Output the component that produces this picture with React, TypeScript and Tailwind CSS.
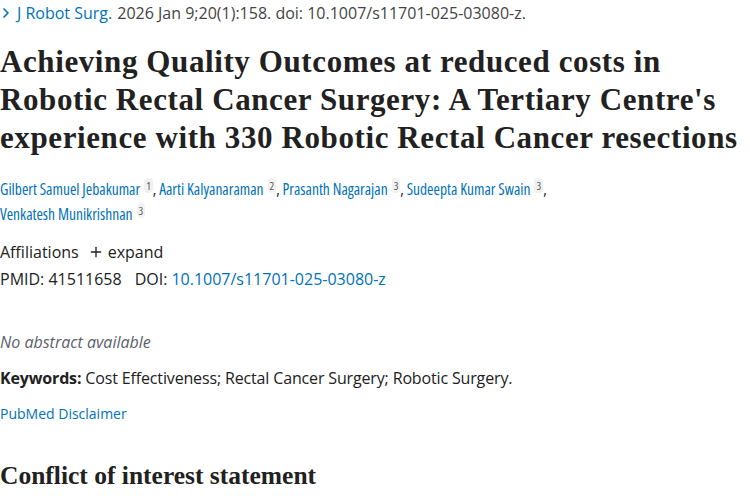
import { ChevronRight, Plus } from "lucide-react";

const authors = [
  { name: "Gilbert Samuel Jebakumar", aff: "1" },
  { name: "Aarti Kalyanaraman", aff: "2" },
  { name: "Prasanth Nagarajan", aff: "3" },
  { name: "Sudeepta Kumar Swain", aff: "3" },
  { name: "Venkatesh Munikrishnan", aff: "3" },
];

const sans = "font-['Open_Sans',sans-serif]";
const serif = "font-['Liberation_Serif',serif]";

export default function App() {
  return (
    <main className={`bg-white w-[750px] h-[500px] overflow-hidden text-[#212121] ${sans}`}>
      {/* Citation */}
      <div className="flex items-center h-[26px] text-[16px]">
        <ChevronRight className="h-4 w-4 text-[#0071bc] -ml-[2px]" strokeWidth={2.5} />
        <a href="#" className="text-[#0071bc] ml-[3px]">J Robot Surg.</a>
        <span className="ml-[5px] text-[#444]">2026 Jan 9;20(1):158. doi: 10.1007/s11701-025-03080-z.</span>
      </div>

      {/* Title */}
      <h1 className={`${serif} font-bold text-[31px] leading-[38px] tracking-[0.6px] text-[#212121] mt-[17px]`}>
        Achieving Quality Outcomes at reduced costs in Robotic Rectal Cancer Surgery: A Tertiary Centre's experience with 330 Robotic Rectal Cancer resections
      </h1>

      {/* Authors */}
      <div className="mt-[20px] w-[580px] text-[15.5px] leading-[25px] font-stretch-condensed">
        {authors.map((a, i) => (
          <span key={i}>
            <span className="whitespace-nowrap">
              <a href="#" className="text-[#0071bc]">{a.name}</a>
              <sup className="ml-[4px] px-[2px] bg-[#f1f1f1] text-[#555] text-[11px] rounded-sm">{a.aff}</sup>
              {i < authors.length - 1 && ","}
            </span>
            {i < authors.length - 1 && " "}
          </span>
        ))}
      </div>

      {/* Affiliations */}
      <div className="mt-[12px] flex items-center text-[16px] leading-[26px]">
        <span>Affiliations</span>
        <Plus className="ml-[9px] h-4 w-4" strokeWidth={2} />
        <span className="ml-[4px]">expand</span>
      </div>
      <div className="flex text-[16px] leading-[28px]">
        <span>PMID: 41511658</span>
        <span className="ml-[13px]">DOI: </span>
        <a href="#" className="ml-[4px] text-[#0071bc]">10.1007/s11701-025-03080-z</a>
      </div>

      {/* Abstract */}
      <p className="mt-[35px] text-[16px] italic text-[#5b616b] leading-[28px]">No abstract available</p>
      <p className="mt-[8px] text-[16px] leading-[28px] tracking-[-0.15px]">
        <strong className="font-bold">Keywords:</strong> Cost Effectiveness; Rectal Cancer Surgery; Robotic Surgery.
      </p>
      <a href="#" className="block mt-[8px] text-[14px] leading-[28px] text-[#0071bc]">PubMed Disclaimer</a>

      {/* Conflict */}
      <h2 className={`${serif} mt-[33px] font-bold text-[25.5px] leading-[30px]`}>Conflict of interest statement</h2>
    </main>
  );
}
